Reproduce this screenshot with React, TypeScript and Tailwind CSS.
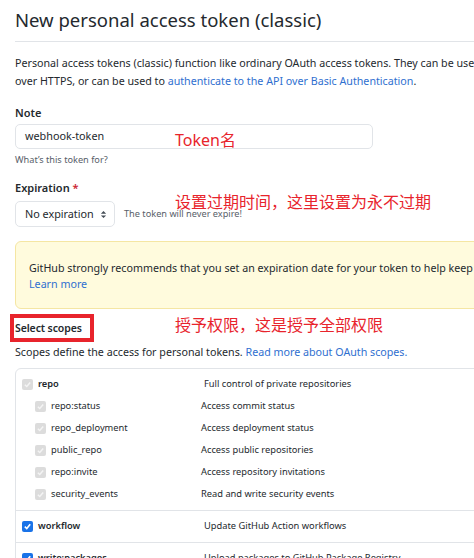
import React from 'react';

type Scope = {
  name: string;
  desc: string;
  sub?: boolean;
  disabled?: boolean;
  bold?: boolean;
};

const repoScopes: Scope[] = [
  { name: 'repo', desc: 'Full control of private repositories', disabled: true, bold: true },
  { name: 'repo:status', desc: 'Access commit status', sub: true, disabled: true },
  { name: 'repo_deployment', desc: 'Access deployment status', sub: true, disabled: true },
  { name: 'public_repo', desc: 'Access public repositories', sub: true, disabled: true },
  { name: 'repo:invite', desc: 'Access repository invitations', sub: true, disabled: true },
  { name: 'security_events', desc: 'Read and write security events', sub: true, disabled: true },
];

function Check({ disabled }: { disabled?: boolean }) {
  if (disabled) {
    return (
      <span className="flex h-[11px] w-[11px] shrink-0 items-center justify-center rounded-[2px] bg-[#dcdcdc]">
        <svg width="9" height="9" viewBox="0 0 10 10">
          <path d="M2 5.2 L4.2 7.3 L8 2.8" fill="none" stroke="#f4f4f4" strokeWidth="1.6" />
        </svg>
      </span>
    );
  }
  return (
    <span className="flex h-[11px] w-[11px] shrink-0 items-center justify-center rounded-[2px] bg-[#1a73e8]">
      <svg width="9" height="9" viewBox="0 0 10 10">
        <path d="M2 5.2 L4.2 7.3 L8 2.6" fill="none" stroke="#fff" strokeWidth="1.8" />
      </svg>
    </span>
  );
}

function ScopeRow({ s }: { s: Scope }) {
  return (
    <div className="flex h-[22px] items-center whitespace-nowrap">
      <div className={`flex items-center gap-[5px] ${s.sub ? 'w-[185px] pl-[19px]' : 'w-[188px] pl-[6px]'}`}>
        <Check disabled={s.disabled} />
        <span className={`text-[9.3px] text-[#24292e] ${s.bold ? 'font-semibold' : ''}`}>{s.name}</span>
      </div>
      <span className="text-[9.3px] text-[#24292e]">{s.desc}</span>
    </div>
  );
}

export default function App() {
  return (
    <div className="h-[558px] w-[474px] overflow-hidden bg-white font-['Noto_Sans','Noto_Sans_CJK_SC',sans-serif] text-[#24292e]">
      <div className="w-[560px] pl-[15px] whitespace-nowrap">
        <h1 className="pt-[6px] pb-[7px] text-[18.5px] leading-[28px] font-normal">New personal access token (classic)</h1>
        <div className="h-px bg-[#e1e4e8]" />
        <p className="mt-[12px] text-[10.7px] leading-[18px]">
          Personal access tokens (classic) function like ordinary OAuth access tokens. They can be used instead of a password
          <br />
          over HTTPS, or can be used to <span className="text-[#2f6fd0]">authenticate to the API over Basic Authentication</span>.
        </p>

        <div className="mt-[15px] text-[11px] leading-[16px] font-semibold">Note</div>
        <div className="relative mt-[3px] flex items-center">
          <div className="flex h-[25px] w-[358px] items-center rounded-[5px] border border-[#e1e4e8] px-[9px] text-[10.8px]">
            webhook-token
          </div>
          <span className="absolute left-[160px] top-[6px] text-[16px] leading-[20px] text-[#e8242c]">Token名</span>
        </div>
        <div className="mt-[4px] text-[9.2px] leading-[14px] text-[#586069]">What’s this token for?</div>

        <div className="mt-[13px] text-[11px] leading-[16px] font-semibold">
          Expiration <span className="text-[#cb2431]">*</span>
        </div>
        <div className="relative mt-[5px] flex items-center">
          <div className="flex h-[26px] w-[100px] items-center justify-between rounded-[5px] border border-[#e1e4e8] pl-[9px] pr-[7px] text-[10.8px]">
            No expiration
            <svg width="7" height="11" viewBox="0 0 8 12">
              <path d="M4 2 L7 5 H1 Z M4 10 L7 7 H1 Z" fill="#444d56" />
            </svg>
          </div>
          <span className="ml-[9px] text-[9.2px] text-[#586069]">The token will never expire!</span>
          <span className="absolute left-[160px] top-[-9px] text-[16px] leading-[20px] text-[#e8242c]">设置过期时间，这里设置为永不过期</span>
        </div>

        <div className="mt-[14px] h-[68px] rounded-[6px] border border-[#f5e6a3] bg-[#fffbdd] px-[13px] pt-[18px] text-[10.7px] leading-[16px]">
          GitHub strongly recommends that you set an expiration date for your token to help keep your information secure.
          <br />
          <span className="text-[#2f6fd0]">Learn more</span>
        </div>

        <div className="relative mt-[5px] ml-[-5px] flex">
          <div className="flex h-[28px] w-[84px] items-center border-4 border-[#e8242c] pl-[1px] pt-[2px] text-[10.5px] font-semibold tracking-[-0.1px]">
            Select scopes
          </div>
          <span className="absolute left-[165px] top-[1px] text-[16px] leading-[20px] text-[#e8242c]">授予权限，这是授予全部权限</span>
        </div>
        <p className="mt-[1px] text-[10.7px] leading-[18px]">
          Scopes define the access for personal tokens. <span className="text-[#2f6fd0]">Read more about OAuth scopes.</span>
        </p>

        <div className="mt-[7px] rounded-t-[6px] border border-[#e1e4e8]">
          <div className="pt-[4px] pb-[5px]">
            {repoScopes.map((s) => (
              <ScopeRow key={s.name} s={s} />
            ))}
          </div>
          <div className="border-t border-[#e1e4e8] pt-[4px] pb-[5px]">
            <ScopeRow s={{ name: 'workflow', desc: 'Update GitHub Action workflows', bold: true }} />
          </div>
          <div className="border-t border-[#e1e4e8] pt-[4px] pb-[5px]">
            <ScopeRow s={{ name: 'write:packages', desc: 'Upload packages to GitHub Package Registry', bold: true }} />
          </div>
        </div>
      </div>
    </div>
  );
}
